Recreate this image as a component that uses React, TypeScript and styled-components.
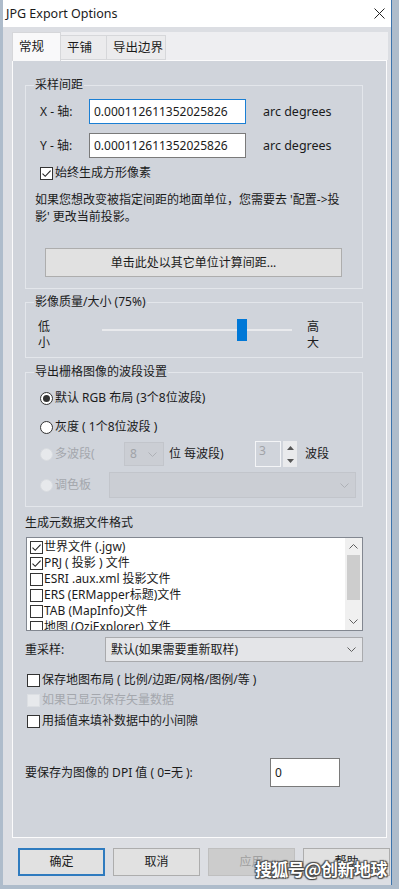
import React from "react";
import styled, { createGlobalStyle } from "styled-components";

const FONT = `"Noto Sans", "Noto Sans CJK SC", sans-serif`;

const GlobalStyle = createGlobalStyle`
  html, body {
    margin: 0;
    padding: 0;
  }
  body {
    background: #aebccb;
    font-family: ${FONT};
    font-size: 12px;
    line-height: 16px;
    color: #1b1b1b;
  }
`;

const Screen = styled.div`
  position: relative;
  width: 399px;
  height: 889px;
  overflow: hidden;
  padding-left: 3px;
  box-sizing: border-box;
  background: #aebccb;
`;

const Window = styled.div`
  width: 389px;
  height: 885px;
  box-sizing: border-box;
  background: #dcdee3;
  border-right: 1px solid #3d74ad;
  display: flex;
  flex-direction: column;
`;

const TitleBar = styled.div`
  flex: none;
  height: 27px;
  background: #fff;
  display: flex;
  align-items: center;
  justify-content: space-between;
  padding-left: 3px;
  font-size: 12.5px;
`;

const CloseBox = styled.div`
  width: 24px;
  height: 27px;
  display: flex;
  align-items: center;
  justify-content: center;
`;

const Client = styled.div`
  padding: 5px 0 0 9px;
`;

const TabStrip = styled.div`
  width: 376px;
  height: 28px;
  background: #eeeef1;
  display: flex;
  align-items: flex-end;
`;

const Tab = styled.div<{ $active?: boolean; $w: number }>`
  position: relative;
  z-index: 1;
  box-sizing: border-box;
  width: ${(p) => p.$w}px;
  height: ${(p) => (p.$active ? 29 : 25)}px;
  margin-bottom: ${(p) => (p.$active ? -1 : 0)}px;
  padding-left: 6px;
  display: flex;
  align-items: center;
  font-size: 12.5px;
  background: ${(p) => (p.$active ? "#f9f9fa" : "#ebebed")};
  border: 1px solid #d6d7da;
  border-bottom: ${(p) => (p.$active ? "none" : "1px solid #d6d7da")};
  border-left: ${(p) => (p.$active ? "1px solid #d6d7da" : "none")};
`;

const Panel = styled.div`
  width: 375px;
  height: 778px;
  box-sizing: border-box;
  border: 1px solid #fbfbfc;
  background: #d0d4db;
  padding-left: 12px;
  display: flex;
  flex-direction: column;
`;

const Group = styled.fieldset<{ $top: number }>`
  width: 338px;
  min-width: 0;
  box-sizing: border-box;
  margin: ${(p) => p.$top}px 0 0 0;
  padding: 0;
  border: 1px solid #e3e6eb;
`;

const Legend = styled.legend`
  margin-left: 8px;
  padding: 0 1px;
  line-height: 16px;
`;

const GroupBody = styled.div<{ $pad: string }>`
  padding: ${(p) => p.$pad};
`;

const FieldRow = styled.div<{ $top?: number }>`
  display: flex;
  align-items: center;
  height: 25px;
  margin-top: ${(p) => p.$top ?? 0}px;
`;

const AxisLabel = styled.span`
  width: 49px;
`;

const TextBox = styled.input<{ $focus?: boolean; $w: number; $h: number }>`
  width: ${(p) => p.$w}px;
  height: ${(p) => p.$h}px;
  box-sizing: border-box;
  margin: 0;
  padding: 0 4px;
  border: 1px solid ${(p) => (p.$focus ? "#1a7fd4" : "#7a7a7a")};
  background: #fff;
  font: inherit;
  font-size: 12px;
  color: #1b1b1b;
  outline: none;
`;

const Units = styled.span`
  margin-left: 17px;
  font-size: 12.5px;
`;

const CheckRow = styled.label<{ $top?: number; $h?: number; $disabled?: boolean; $indent?: number }>`
  display: flex;
  align-items: center;
  gap: 2px;
  height: ${(p) => p.$h ?? 16}px;
  margin-top: ${(p) => p.$top ?? 0}px;
  margin-left: ${(p) => p.$indent ?? 0}px;
  color: ${(p) => (p.$disabled ? "#a4a7ad" : "#1b1b1b")};
`;

const Box = styled.span<{ $disabled?: boolean }>`
  flex: none;
  width: 13px;
  height: 13px;
  box-sizing: border-box;
  border: 1px solid ${(p) => (p.$disabled ? "#dcdfe3" : "#333")};
  background: ${(p) => (p.$disabled ? "#e7e9ec" : "#fff")};
  display: inline-flex;
  align-items: center;
  justify-content: center;
`;

const Note = styled.p`
  margin: 10px 0 0 -5px;
  width: 316px;
  line-height: 17px;
`;

const WideButton = styled.button`
  display: block;
  margin: 23px 0 0 5px;
  width: 297px;
  height: 29px;
  box-sizing: border-box;
  border: 1px solid #adadad;
  background: #e1e1e1;
  font: inherit;
  font-size: 12px;
  color: #1b1b1b;
  padding: 0;
`;

const SliderRow = styled.div`
  display: flex;
  padding-left: 12px;
`;

const EndLabels = styled.div`
  display: flex;
  flex-direction: column;
  width: 12px;
  line-height: 16px;
`;

const Track = styled.div`
  position: relative;
  width: 190px;
  height: 32px;
  margin: 0 15px 0 52px;
  &::before {
    content: "";
    position: absolute;
    left: 0;
    right: 0;
    top: 10px;
    height: 2px;
    background: #e9eaed;
  }
`;

const Thumb = styled.div`
  position: absolute;
  top: 0;
  width: 10px;
  height: 22px;
  background: #0078d7;
`;

const BandRow = styled.div<{ $top: number; $h: number }>`
  display: flex;
  align-items: center;
  height: ${(p) => p.$h}px;
  margin-top: ${(p) => p.$top}px;
`;

const RadioLabel = styled.label<{ $w?: number; $disabled?: boolean }>`
  display: flex;
  align-items: center;
  gap: 2px;
  width: ${(p) => (p.$w ? `${p.$w}px` : "auto")};
  flex: none;
  color: ${(p) => (p.$disabled ? "#a4a7ad" : "#1b1b1b")};
`;

const RadioDot = styled.span<{ $checked?: boolean; $disabled?: boolean }>`
  flex: none;
  width: 13px;
  height: 13px;
  border-radius: 50%;
  box-sizing: border-box;
  border: 1px solid ${(p) => (p.$disabled ? "#d9dce0" : "#333")};
  background: ${(p) => (p.$disabled ? "#e7e9ec" : "#fff")};
  display: inline-flex;
  align-items: center;
  justify-content: center;
  &::after {
    content: "";
    display: ${(p) => (p.$checked ? "block" : "none")};
    width: 7px;
    height: 7px;
    border-radius: 50%;
    background: #333;
  }
`;

const Select = styled.div<{ $w: number; $h: number; $disabled?: boolean }>`
  flex: none;
  width: ${(p) => p.$w}px;
  height: ${(p) => p.$h}px;
  box-sizing: border-box;
  padding: 0 6px 0 5px;
  display: flex;
  align-items: center;
  justify-content: space-between;
  border: 1px solid ${(p) => (p.$disabled ? "#c2c5cb" : "#a9aaad")};
  background: ${(p) => (p.$disabled ? "#cbced4" : "#e4e5e8")};
  color: ${(p) => (p.$disabled ? "#a0a3a8" : "#1b1b1b")};
`;

const PlainText = styled.span<{ $w?: number; $left?: number }>`
  flex: none;
  width: ${(p) => (p.$w ? `${p.$w}px` : "auto")};
  margin-left: ${(p) => p.$left ?? 0}px;
`;

const SpinBox = styled.div`
  flex: none;
  width: 26px;
  height: 26px;
  box-sizing: border-box;
  border: 1px solid #f4f5f7;
  padding: 1px 0 0 3px;
  color: #a0a3a8;
  line-height: 16px;
`;

const SpinButtons = styled.div`
  flex: none;
  width: 14px;
  height: 26px;
  margin-left: 2px;
  background: #e9eaec;
  display: flex;
  flex-direction: column;
  justify-content: space-around;
  align-items: center;
`;

const SectionLabel = styled.div`
  margin-top: 8px;
  line-height: 16px;
`;

const ListBox = styled.div`
  margin: 6px 0 0 1px;
  width: 337px;
  height: 94px;
  box-sizing: border-box;
  border: 1px solid #828790;
  background: #fff;
  display: flex;
  overflow: hidden;
`;

const ListItems = styled.div`
  flex: 1;
  padding-top: 1px;
`;

const ListItem = styled.div`
  height: 16px;
  display: flex;
  align-items: center;
  gap: 1px;
  padding-left: 3px;
  white-space: nowrap;
`;

const ScrollBar = styled.div`
  flex: none;
  width: 17px;
  background: #f0f0f0;
  display: flex;
  flex-direction: column;
  align-items: center;
`;

const ScrollArrow = styled.div`
  height: 17px;
  width: 17px;
  display: flex;
  align-items: center;
  justify-content: center;
`;

const ScrollThumb = styled.div`
  width: 13px;
  height: 45px;
  background: #cdcdcd;
`;

const ResampleRow = styled.div`
  display: flex;
  align-items: center;
  margin-top: 6px;
  height: 25px;
`;

const DpiRow = styled.div`
  display: flex;
  align-items: center;
  margin-top: 27px;
  height: 29px;
`;

const ButtonBar = styled.div`
  display: flex;
  gap: 8px;
  margin-top: 10px;
  padding-left: 6px;
`;

const DialogButton = styled.button<{ $default?: boolean; $disabled?: boolean }>`
  width: 87px;
  height: 28px;
  box-sizing: border-box;
  padding: 0;
  font: inherit;
  font-size: 12px;
  border: ${(p) => (p.$default ? "2px solid #2f7bbf" : `1px solid ${p.$disabled ? "#bfbfbf" : "#adadad"}`)};
  background: ${(p) => (p.$disabled ? "#cccccc" : "#e1e1e1")};
  color: ${(p) => (p.$disabled ? "#a0a0a0" : "#1b1b1b")};
`;

const Watermark = styled.div`
  position: absolute;
  right: 12px;
  top: 858px;
  font-family: "Noto Sans CJK SC", sans-serif;
  font-weight: 700;
  font-size: 17px;
  line-height: 22px;
  letter-spacing: -0.5px;
  color: #fff;
  text-shadow: 0 0 1px #333, 1px 1px 1px #444, -1px -1px 1px #555, 1px -1px 1px #555, -1px 1px 1px #555;
`;

const Chevron = ({ color = "#606060", up = false }: { color?: string; up?: boolean }) => (
  <svg width="9" height="5" viewBox="0 0 9 5">
    <path d={up ? "M0.5 4.5 L4.5 0.5 L8.5 4.5" : "M0.5 0.5 L4.5 4.5 L8.5 0.5"} fill="none" stroke={color} strokeWidth="1" />
  </svg>
);

const Check = ({ checked, disabled }: { checked?: boolean; disabled?: boolean }) => (
  <Box $disabled={disabled}>
    {checked && (
      <svg width="11" height="11" viewBox="0 0 11 11">
        <path d="M1.5 5.6 L4.2 8.3 L9.6 2.6" fill="none" stroke="#222" strokeWidth="1.1" />
      </svg>
    )}
  </Box>
);

const metaFiles = [
  { label: "世界文件 (.jgw)", checked: true },
  { label: "PRJ ( 投影 ) 文件", checked: true },
  { label: "ESRI .aux.xml 投影文件", checked: false },
  { label: "ERS (ERMapper标题)文件", checked: false },
  { label: "TAB (MapInfo)文件", checked: false },
  { label: "地图 (OziExplorer) 文件", checked: false },
];

function App() {
  const quality = 75;
  return (
    <>
      <GlobalStyle />
      <Screen>
        <Window>
          <TitleBar>
            <span>JPG Export Options</span>
            <CloseBox>
              <svg width="11" height="11" viewBox="0 0 11 11">
                <path d="M0.5 0.5 L10.5 10.5 M10.5 0.5 L0.5 10.5" stroke="#222" strokeWidth="1" />
              </svg>
            </CloseBox>
          </TitleBar>
          <Client>
            <TabStrip>
              <Tab $active $w={49}>常规</Tab>
              <Tab $w={46}>平铺</Tab>
              <Tab $w={59}>导出边界</Tab>
            </TabStrip>
            <Panel>
              <Group $top={16}>
                <Legend>采样间距</Legend>
                <GroupBody $pad="6px 0 11px 14px">
                  <FieldRow>
                    <AxisLabel>X - 轴:</AxisLabel>
                    <TextBox $focus $w={157} $h={25} readOnly defaultValue="0.000112611352025826" />
                    <Units>arc degrees</Units>
                  </FieldRow>
                  <FieldRow $top={9}>
                    <AxisLabel>Y - 轴:</AxisLabel>
                    <TextBox $w={157} $h={25} readOnly defaultValue="0.000112611352025826" />
                    <Units>arc degrees</Units>
                  </FieldRow>
                  <CheckRow $top={7}>
                    <Check checked />
                    始终生成方形像素
                  </CheckRow>
                  <Note>如果您想改变被指定间距的地面单位，您需要去 '配置-&gt;投影' 更改当前投影。</Note>
                  <WideButton>单击此处以其它单位计算间距...</WideButton>
                </GroupBody>
              </Group>

              <Group $top={5}>
                <Legend>影像质量/大小 (75%)</Legend>
                <GroupBody $pad="9px 0 6px 0">
                  <SliderRow>
                    <EndLabels>
                      <span>低</span>
                      <span>小</span>
                    </EndLabels>
                    <Track>
                      <Thumb style={{ left: `${(180 * quality) / 100}px` }} />
                    </Track>
                    <EndLabels>
                      <span>高</span>
                      <span>大</span>
                    </EndLabels>
                  </SliderRow>
                </GroupBody>
              </Group>

              <Group $top={6}>
                <Legend>导出栅格图像的波段设置</Legend>
                <GroupBody $pad="8px 0 8px 14px">
                  <BandRow $top={0} $h={20}>
                    <RadioLabel>
                      <RadioDot $checked />
                      默认 RGB 布局 (3个8位波段)
                    </RadioLabel>
                  </BandRow>
                  <BandRow $top={9} $h={20}>
                    <RadioLabel>
                      <RadioDot />
                      灰度 ( 1个8位波段 )
                    </RadioLabel>
                  </BandRow>
                  <BandRow $top={4} $h={26}>
                    <RadioLabel $w={84} $disabled>
                      <RadioDot $disabled />
                      多波段(
                    </RadioLabel>
                    <Select $w={40} $h={24} $disabled>
                      <span>8</span>
                      <Chevron color="#aeb1b6" />
                    </Select>
                    <PlainText $w={86} $left={5}>位 每波段)</PlainText>
                    <SpinBox>3</SpinBox>
                    <SpinButtons>
                      <svg width="7" height="4" viewBox="0 0 7 4">
                        <path d="M0 4 L3.5 0 L7 4 Z" fill="#555" />
                      </svg>
                      <svg width="7" height="4" viewBox="0 0 7 4">
                        <path d="M0 0 L3.5 4 L7 0 Z" fill="#555" />
                      </svg>
                    </SpinButtons>
                    <PlainText $left={8}>波段</PlainText>
                  </BandRow>
                  <BandRow $top={5} $h={26}>
                    <RadioLabel $w={69} $disabled>
                      <RadioDot $disabled />
                      调色板
                    </RadioLabel>
                    <Select $w={247} $h={26} $disabled>
                      <span />
                      <Chevron color="#aeb1b6" />
                    </Select>
                  </BandRow>
                </GroupBody>
              </Group>

              <SectionLabel>生成元数据文件格式</SectionLabel>
              <ListBox>
                <ListItems>
                  {metaFiles.map((f) => (
                    <ListItem key={f.label}>
                      <Check checked={f.checked} />
                      {f.label}
                    </ListItem>
                  ))}
                </ListItems>
                <ScrollBar>
                  <ScrollArrow>
                    <Chevron up />
                  </ScrollArrow>
                  <ScrollThumb />
                  <div style={{ flex: 1 }} />
                  <ScrollArrow>
                    <Chevron />
                  </ScrollArrow>
                </ScrollBar>
              </ListBox>

              <ResampleRow>
                <PlainText $w={80}>重采样:</PlainText>
                <Select $w={258} $h={25}>
                  <span>默认(如果需要重新取样)</span>
                  <Chevron />
                </Select>
              </ResampleRow>

              <CheckRow $top={8} $h={20} $indent={2}>
                <Check />
                保存地图布局 ( 比例/边距/网格/图例/等 )
              </CheckRow>
              <CheckRow $h={20} $indent={2} $disabled>
                <Check disabled />
                如果已显示保存矢量数据
              </CheckRow>
              <CheckRow $top={1} $h={20} $indent={2}>
                <Check />
                用插值来填补数据中的小间隙
              </CheckRow>

              <DpiRow>
                <PlainText $w={245}>要保存为图像的 DPI 值 ( 0=无 ):</PlainText>
                <TextBox $w={70} $h={29} readOnly defaultValue="0" />
              </DpiRow>
            </Panel>
            <ButtonBar>
              <DialogButton $default>确定</DialogButton>
              <DialogButton>取消</DialogButton>
              <DialogButton $disabled>应用</DialogButton>
              <DialogButton>帮助</DialogButton>
            </ButtonBar>
          </Client>
        </Window>
        <Watermark>搜狐号@创新地球</Watermark>
      </Screen>
    </>
  );
}

export default App;
